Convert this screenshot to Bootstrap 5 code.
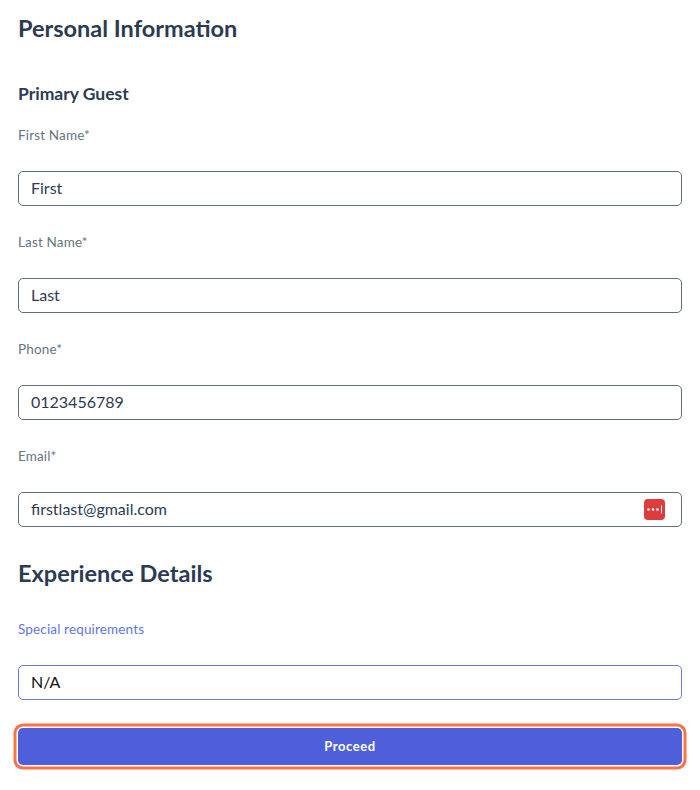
<!DOCTYPE html>
<html lang="en">
<head>
<meta charset="utf-8">
<title>Personal Information</title>
<link rel="stylesheet" href="https://cdn.jsdelivr.net/npm/bootstrap@5.3.0/dist/css/bootstrap.min.css">
<style>
body { font-family: Lato, "Noto Sans", sans-serif; background: #fff; color: #2d3b52; }
.page-wrap { padding: 13px 18px 24px; }
.title-main { font-size: 23.5px; line-height: 30px; font-weight: 700; color: #2d3b52; margin: 0; }
.title-sub { font-size: 17.5px; line-height: 22px; font-weight: 700; color: #2d3b52; margin: 40px 0 0; }
.field-label { display: block; font-size: 13.5px; line-height: 18px; letter-spacing: .15px; color: #66757f; margin: 0 0 27px; }
.field-box { height: 35px; border: 1px solid #5c6f80; border-radius: 5px; padding: 0 12px 2px; font-size: 16px; color: #2d3b52; box-shadow: none; background-color: #fff; }
.field-group { margin-bottom: 27px; }
.first-group { margin-top: 21px; }
.title-exp { margin-top: 31px; }
.label-accent { color: #6274e6; margin-top: 32px; }
.field-accent { border-color: #6b7bdc; color: #111; }
.key-badge { position: absolute; right: 17px; top: 7px; width: 21px; height: 21px; }
.proceed-btn { height: 37px; margin-top: 28px; background: #4f5fd9; border: 0; border-radius: 5px; color: #fff; font-size: 13px; font-weight: 700; letter-spacing: .6px; box-shadow: 0 0 0 1.5px #fff, 0 0 0 4.5px #ff7043; }
</style>
</head>
<body>
<div class="page-wrap">
  <h1 class="title-main">Personal Information</h1>
  <h2 class="title-sub">Primary Guest</h2>
  <form>
    <div class="field-group first-group">
      <label class="field-label" for="f1">First Name*</label>
      <input id="f1" class="form-control field-box" value="First">
    </div>
    <div class="field-group">
      <label class="field-label" for="f2">Last Name*</label>
      <input id="f2" class="form-control field-box" value="Last">
    </div>
    <div class="field-group">
      <label class="field-label" for="f3">Phone*</label>
      <input id="f3" class="form-control field-box" value="0123456789">
    </div>
    <div class="field-group">
      <label class="field-label" for="f4">Email*</label>
      <div class="position-relative">
        <input id="f4" class="form-control field-box" value="firstlast@gmail.com">
        <svg class="key-badge" viewBox="0 0 21 21" aria-hidden="true">
          <rect width="21" height="21" rx="4" fill="#dc3d3a"/>
          <circle cx="4.5" cy="10.5" r="1.3" fill="#fff"/>
          <circle cx="9" cy="10.5" r="1.3" fill="#fff"/>
          <circle cx="13.5" cy="10.5" r="1.3" fill="#fff"/>
          <rect x="17" y="6.5" width="1" height="8" fill="#fff"/>
        </svg>
      </div>
    </div>
    <h2 class="title-main title-exp">Experience Details</h2>
    <label class="field-label label-accent" for="f5">Special requirements</label>
    <input id="f5" class="form-control field-box field-accent" value="N/A">
    <button type="button" class="btn w-100 d-block proceed-btn">Proceed</button>
  </form>
</div>
<script src="https://cdn.jsdelivr.net/npm/bootstrap@5.3.0/dist/js/bootstrap.bundle.min.js"></script>
</body>
</html>
